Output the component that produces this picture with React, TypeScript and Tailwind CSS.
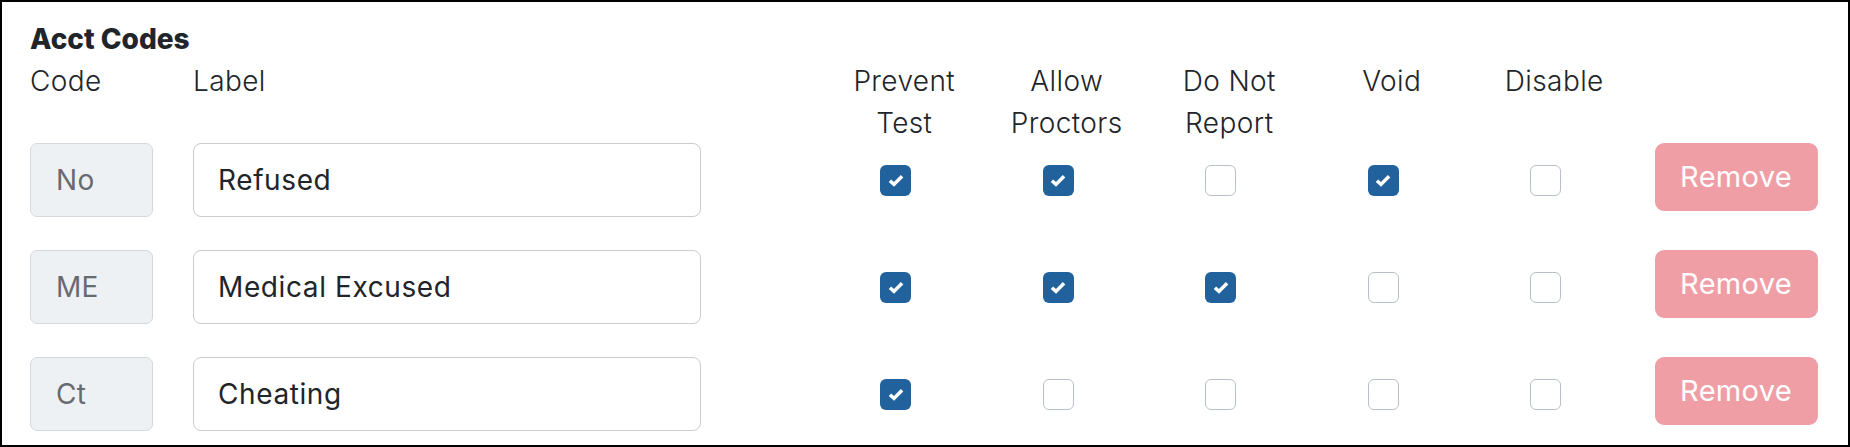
import React from "react";

type Row = { code: string; label: string; checks: boolean[] };

const rows: Row[] = [
  { code: "No", label: "Refused", checks: [true, true, false, true, false] },
  { code: "ME", label: "Medical Excused", checks: [true, true, true, false, false] },
  { code: "Ct", label: "Cheating", checks: [true, false, false, false, false] },
];

const headers: string[][] = [
  ["Prevent", "Test"],
  ["Allow", "Proctors"],
  ["Do Not", "Report"],
  ["Void"],
  ["Disable"],
];

function Check({ on }: { on: boolean }) {
  if (on) {
    return (
      <div className="w-[31px] h-[31px] rounded-[6px] bg-[#22629c] flex items-center justify-center">
        <svg width="18" height="18" viewBox="0 0 16 16">
          <path d="M2.6 8.6 L6.2 11.9 L13.4 4.6" fill="none" stroke="#ffffff" strokeWidth="3.1" strokeLinecap="butt" strokeLinejoin="miter" />
        </svg>
      </div>
    );
  }
  return <div className="w-[31px] h-[31px] rounded-[6px] border border-[#b9c0c8] bg-white" />;
}

export default function App() {
  return (
    <div
      className="w-[1850px] h-[447px] box-border border-2 border-black bg-white pl-[28px] pt-[16px] text-[#212529] overflow-hidden"
      style={{ fontFamily: "Inter, 'Noto Sans', sans-serif" }}
    >
      <div className="text-[28px] leading-[42px] font-extrabold tracking-[0px]">Acct Codes</div>
      <div className="flex h-[83px] text-[28px] leading-[42px] font-light tracking-[0.4px]">
        <div className="w-[123px]">Code</div>
        <div className="ml-[40px] w-[508px]">Label</div>
        <div className="ml-[122px] flex">
          {headers.map((h, i) => (
            <div key={i} className="w-[162.5px] text-center">
              {h.map((l, j) => (
                <div key={j}>{l}</div>
              ))}
            </div>
          ))}
        </div>
      </div>
      {rows.map((r, i) => (
        <div key={i} className={`flex items-start ${i > 0 ? "mt-[33px]" : ""}`}>
          <div className="w-[123px] h-[74px] box-border rounded-[7px] border border-[#d5d9dd] bg-[#eef1f4] flex items-center pl-[25px] text-[28px] tracking-[0.3px] text-[#676b70]">
            {r.code}
          </div>
          <div className="ml-[40px] w-[508px] h-[74px] box-border rounded-[8px] border border-[#cccccc] bg-white flex items-center pl-[24px] text-[28px] tracking-[0.6px] text-[#212529]">
            {r.label}
          </div>
          <div className="ml-[122px] flex">
            {r.checks.map((c, j) => (
              <div key={j} className="w-[162.5px] h-[74px] flex items-center justify-center pr-[17px]">
                <Check on={c} />
              </div>
            ))}
          </div>
          <div className="ml-[19px] w-[163px] h-[68px] rounded-[9px] bg-[#f09ea5] flex items-center justify-center text-white text-[29px] tracking-[0.3px]">
            Remove
          </div>
        </div>
      ))}
    </div>
  );
}
